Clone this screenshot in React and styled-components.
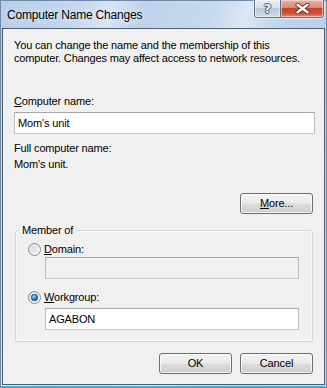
import React from 'react';
import styled, { createGlobalStyle } from 'styled-components';

const Global = createGlobalStyle`
  html, body { margin: 0; padding: 0; background: #ffffff; }
  body { font-family: "Liberation Sans", Arial, sans-serif; }
  * { box-sizing: border-box; }
`;

const Window = styled.div`
  width: 327px;
  height: 388px;
  display: flex;
  flex-direction: column;
  padding: 0 2px 3px 2px;
  background:
    linear-gradient(105deg,
      #b7cee8 0%, #c3d7ee 18%, #d6e5f4 26%, #bed3ea 34%,
      #c6d9ee 50%, #dbe8f5 58%, #c1d6ec 66%, #b9cfe8 80%, #c7daee 100%);
  box-shadow: inset 0 0 0 1px #6f8aa6, inset 0 -2px 0 #38c4ea, inset -1px 0 0 #62b8de;
`;

const TitleBar = styled.div`
  height: 28px;
  display: flex;
  align-items: flex-start;
  flex-shrink: 0;
`;

const Title = styled.div`
  padding: 8px 0 0 5px;
  font-size: 12px;
  line-height: 14px;
  letter-spacing: -0.2px;
  color: #000;
  text-shadow: 0 0 6px rgba(255, 255, 255, 0.9);
`;

const CaptionGroup = styled.div`
  margin-left: auto;
  margin-right: 1px;
  display: flex;
  height: 18px;
  border: 1px solid #5e6d80;
  border-top: none;
  border-radius: 0 0 4px 4px;
  overflow: hidden;
  box-shadow: 0 0 0 1px rgba(255, 255, 255, 0.5);
`;

const CaptionButton = styled.div`
  width: ${p => p.$w}px;
  height: 100%;
  display: flex;
  align-items: center;
  justify-content: center;
  background: ${p => p.$close
    ? 'linear-gradient(180deg, #e8b1a5 0%, #d98a78 45%, #c74429 50%, #c9553b 80%, #e0907a 100%)'
    : 'linear-gradient(180deg, #e9eef4 0%, #d7e0ea 45%, #bccadb 50%, #c6d3e2 80%, #d5e0ec 100%)'};
  border-left: ${p => p.$close ? '1px solid #5e6d80' : 'none'};
  box-shadow: inset 0 0 0 1px rgba(255, 255, 255, 0.45);
`;

const HelpGlyph = styled.span`
  font-family: "DejaVu Sans", sans-serif;
  font-weight: bold;
  font-size: 13px;
  line-height: 13px;
  color: #eef2f6;
  text-shadow: 1px 0 0 #4d5a68, -1px 0 0 #4d5a68, 0 1px 0 #4d5a68, 0 -1px 0 #4d5a68;
`;

const Client = styled.div`
  flex: 1;
  display: flex;
  flex-direction: column;
  background: #f0f0f0;
  border: 1px solid #4f5f70;
  padding: 10px 9px 0 11px;
  font-size: 11px;
  line-height: 13px;
  letter-spacing: -0.15px;
  color: #000;
`;

const Text = styled.div`
  margin-top: ${p => p.$mt || 0}px;
  white-space: nowrap;
`;

const Mn = styled.span`
  text-decoration: underline;
  text-underline-offset: 1px;
`;

const TextBox = styled.div`
  height: 22px;
  margin-top: ${p => p.$mt || 0}px;
  margin-left: ${p => p.$ml || 0}px;
  border: 1px solid;
  border-color: #a4a8ad #bcc0c5 #c6cacf #bcc0c5;
  background: ${p => p.$disabled ? '#f0f0f0' : '#ffffff'};
  padding: 0 3px;
  display: flex;
  align-items: center;
  font-size: 11px;
`;

const ButtonRow = styled.div`
  display: flex;
  justify-content: flex-end;
  gap: 8px;
  margin-top: ${p => p.$mt || 0}px;
  margin-right: 2px;
`;

const Button = styled.div`
  width: 73px;
  height: 21px;
  border: 1px solid #707070;
  border-radius: 3px;
  background: linear-gradient(180deg, #f2f2f2 0%, #ebebeb 48%, #dddddd 52%, #cfcfcf 100%);
  box-shadow: inset 0 0 0 1px rgba(255, 255, 255, 0.75);
  display: flex;
  align-items: center;
  justify-content: center;
  font-size: 11px;
`;

const Group = styled.fieldset`
  margin: 10px 2px 0 1px;
  padding: 0 13px 11px 12px;
  border: 1px solid #d0d8de;
  border-radius: 3px;
  box-shadow: inset 0 0 0 1px rgba(255, 255, 255, 0.6);
  min-width: 0;
`;

const Legend = styled.legend`
  margin-left: -8px;
  padding: 0 2px;
  line-height: 13px;
  font-size: 11px;
`;

const RadioRow = styled.div`
  display: flex;
  align-items: center;
  gap: 3px;
  height: 13px;
  margin-top: ${p => p.$mt || 0}px;
`;

const RadioIcon = ({ checked }) => (
  <svg width="13" height="13" viewBox="0 0 13 13">
    <defs>
      <linearGradient id="rbg" x1="0" y1="0" x2="1" y2="1">
        <stop offset="0" stopColor="#cfcfcf" />
        <stop offset="1" stopColor="#fbfbfb" />
      </linearGradient>
      <radialGradient id="rdot" cx="0.4" cy="0.35" r="0.7">
        <stop offset="0" stopColor="#a8e2ff" />
        <stop offset="0.5" stopColor="#2e8bd2" />
        <stop offset="1" stopColor="#0c4f8c" />
      </radialGradient>
    </defs>
    <circle cx="6.5" cy="6.5" r="6" fill="url(#rbg)" stroke="#8a8d91" strokeWidth="1" />
    <circle cx="6.5" cy="6.5" r="4.3" fill="none" stroke="#ffffff" strokeOpacity="0.7" strokeWidth="1" />
    {checked && <circle cx="6.5" cy="6.5" r="3.2" fill="url(#rdot)" stroke="#1b4c78" strokeWidth="0.8" />}
  </svg>
);

const CloseIcon = () => (
  <svg width="15" height="11" viewBox="0 0 15 11">
    <path d="M2.5 1.8 L12.5 9.2 M12.5 1.8 L2.5 9.2" stroke="#6b2a1e" strokeWidth="4.2" strokeLinecap="round" />
    <path d="M2.5 1.8 L12.5 9.2 M12.5 1.8 L2.5 9.2" stroke="#ffffff" strokeWidth="2.4" strokeLinecap="round" />
  </svg>
);

export default function App() {
  return (
    <>
      <Global />
      <Window>
        <TitleBar>
          <Title>Computer Name Changes</Title>
          <CaptionGroup>
            <CaptionButton $w={25}><HelpGlyph>?</HelpGlyph></CaptionButton>
            <CaptionButton $w={43} $close><CloseIcon /></CaptionButton>
          </CaptionGroup>
        </TitleBar>
        <Client>
          <Text>You can change the name and the membership of this</Text>
          <Text>computer. Changes may affect access to network resources.</Text>
          <Text $mt={30}><Mn>C</Mn>omputer name:</Text>
          <TextBox $mt={4}>Mom's unit</TextBox>
          <Text $mt={8}>Full computer name:</Text>
          <Text $mt={3}>Mom's unit.</Text>
          <ButtonRow $mt={22}>
            <Button><span><Mn>M</Mn>ore...</span></Button>
          </ButtonRow>
          <Group>
            <Legend>Member of</Legend>
            <RadioRow $mt={6}>
              <RadioIcon />
              <span><Mn>D</Mn>omain:</span>
            </RadioRow>
            <TextBox $mt={1} $ml={17} $disabled />
            <RadioRow $mt={12}>
              <RadioIcon checked />
              <span><Mn>W</Mn>orkgroup:</span>
            </RadioRow>
            <TextBox $mt={4} $ml={17}>AGABON</TextBox>
          </Group>
          <ButtonRow $mt={11}>
            <Button>OK</Button>
            <Button>Cancel</Button>
          </ButtonRow>
        </Client>
      </Window>
    </>
  );
}
